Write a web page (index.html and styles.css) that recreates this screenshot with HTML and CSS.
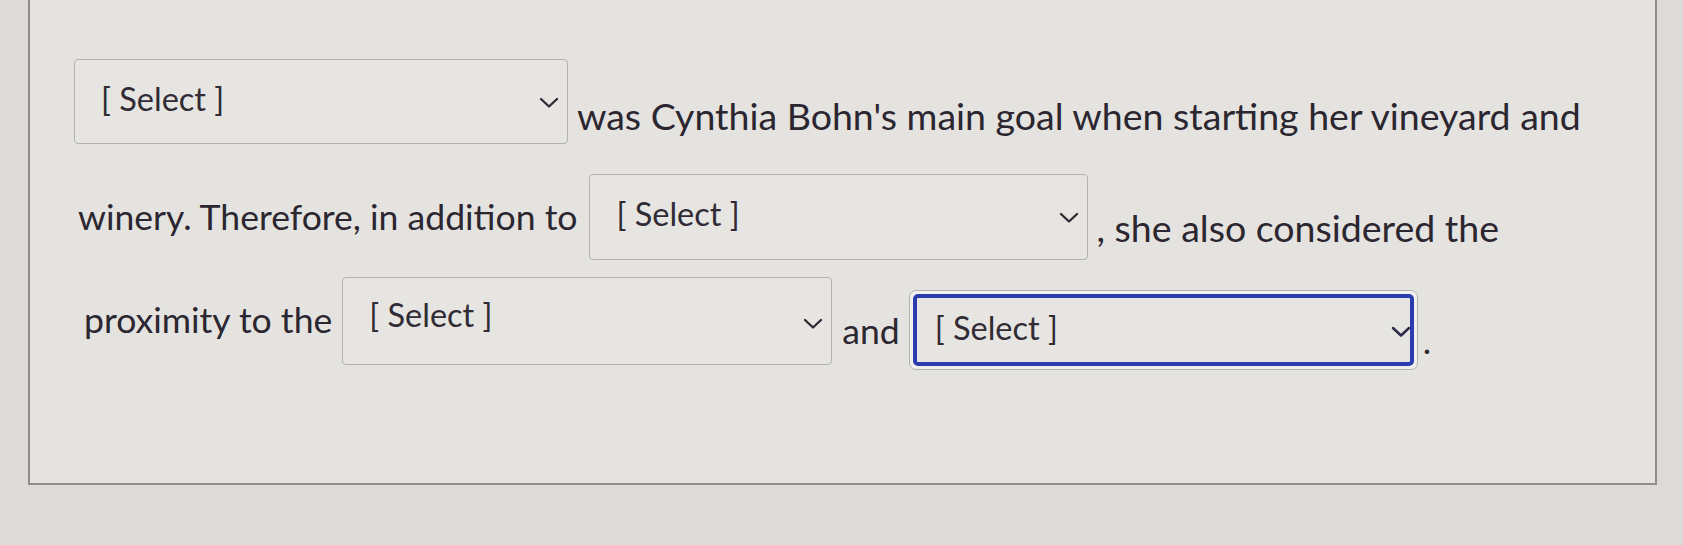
FILE: index.html
```html
<!DOCTYPE html>
<html lang="en">
<head>
<meta charset="utf-8">
<title>Question</title>
<link rel="stylesheet" href="styles.css">
</head>
<body>
<div class="page">
  <div class="panel">
    <div class="question">
      <div class="line l1">
        <span class="select s1"><span class="label">[ Select ]</span><svg class="chev" viewBox="0 0 20 11"><path d="M2 2 L10 9.5 L18 2"/></svg></span>
        <span class="txt r t1">was Cynthia Bohn's main goal when starting her vineyard and</span>
      </div>
      <div class="line l2">
        <span class="txt t2a">winery. Therefore, in addition to</span>
        <span class="select s2"><span class="label">[ Select ]</span><svg class="chev" viewBox="0 0 20 11"><path d="M2 2 L10 9.5 L18 2"/></svg></span>
        <span class="txt r t2b">, she also considered the</span>
      </div>
      <div class="line l3">
        <span class="txt t3a">proximity to the</span>
        <span class="select s3"><span class="label">[ Select ]</span><svg class="chev" viewBox="0 0 20 11"><path d="M2 2 L10 9.5 L18 2"/></svg></span>
        <span class="txt t3b">and</span>
        <span class="select s4 focus"><span class="ring"><span class="label">[ Select ]</span><svg class="chev" viewBox="0 0 20 11"><path d="M2 2 L10 9.5 L18 2"/></svg></span></span>
        <span class="txt t3c">.</span>
      </div>
    </div>
  </div>
</div>
</body>
</html>
```

FILE: styles.css
```css
html, body {
  margin: 0;
  padding: 0;
}
body {
  background: #dddbd7;
  font-family: Lato, "Open Sans", sans-serif;
  color: #2b2630;
  width: 1683px;
  height: 545px;
  overflow: hidden;
}
.page {
  padding-left: 28px;
}
.panel {
  width: 1629px;
  height: 485px;
  box-sizing: border-box;
  border: 2px solid #8e8d8a;
  border-top: none;
  background: #e4e3df;
}
.question {
  padding: 59px 0 0 44px;
}
.line {
  display: flex;
  align-items: flex-start;
}
.l2 { margin-top: 30px; padding-left: 4px; }
.l3 { margin-top: 17px; padding-left: 10px; }

.txt {
  white-space: nowrap;
  font-size: 35.6px;
  line-height: 1.2;
}
.txt.r { font-size: 37.5px; }

.t1 { margin-left: 9px; margin-top: 34px; }
.t2a { margin-top: 22px; }
.t2b { margin-left: 8px; margin-top: 31px; }
.t3a { margin-top: 22px; }
.t3b { margin-left: 10px; margin-top: 33px; }
.t3c { margin-left: 5px; margin-top: 43px; }

.select {
  position: relative;
  flex: none;
  box-sizing: border-box;
  border: 1.5px solid #b3b2ae;
  border-radius: 4px;
  background: #e6e5e1;
  padding: 19px 0 0 26px;
  font-size: 32.5px;
  line-height: 1.2;
  color: #302b34;
}
.label {
  display: block;
  white-space: nowrap;
}
.s1 { width: 494px; height: 85px; }
.s2 { width: 499px; height: 86px; margin-left: 12px; }
.s3 { width: 490px; height: 88px; margin-left: 10px; padding-top: 17px; }
.s4 { width: 509px; height: 80px; margin-left: 9px; margin-top: 13px; }

.chev {
  position: absolute;
  right: 8px;
  top: 37px;
  width: 20px;
  height: 11px;
  fill: none;
  stroke: #2e2934;
  stroke-width: 2.3;
  stroke-linecap: round;
  stroke-linejoin: round;
}
.s3 .chev { top: 40px; }

.focus {
  padding: 3px;
  border-radius: 7px;
  background: #f0f0ee;
}
.ring {
  display: block;
  position: relative;
  box-sizing: border-box;
  height: 100%;
  border: 4px solid #2a3cae;
  border-radius: 5px;
  background: #e6e5e1;
  padding: 10px 0 0 18px;
}
.focus .chev {
  right: -1px;
  top: 28px;
  stroke-width: 2.5;
  stroke: #2b2b4a;
}
```
